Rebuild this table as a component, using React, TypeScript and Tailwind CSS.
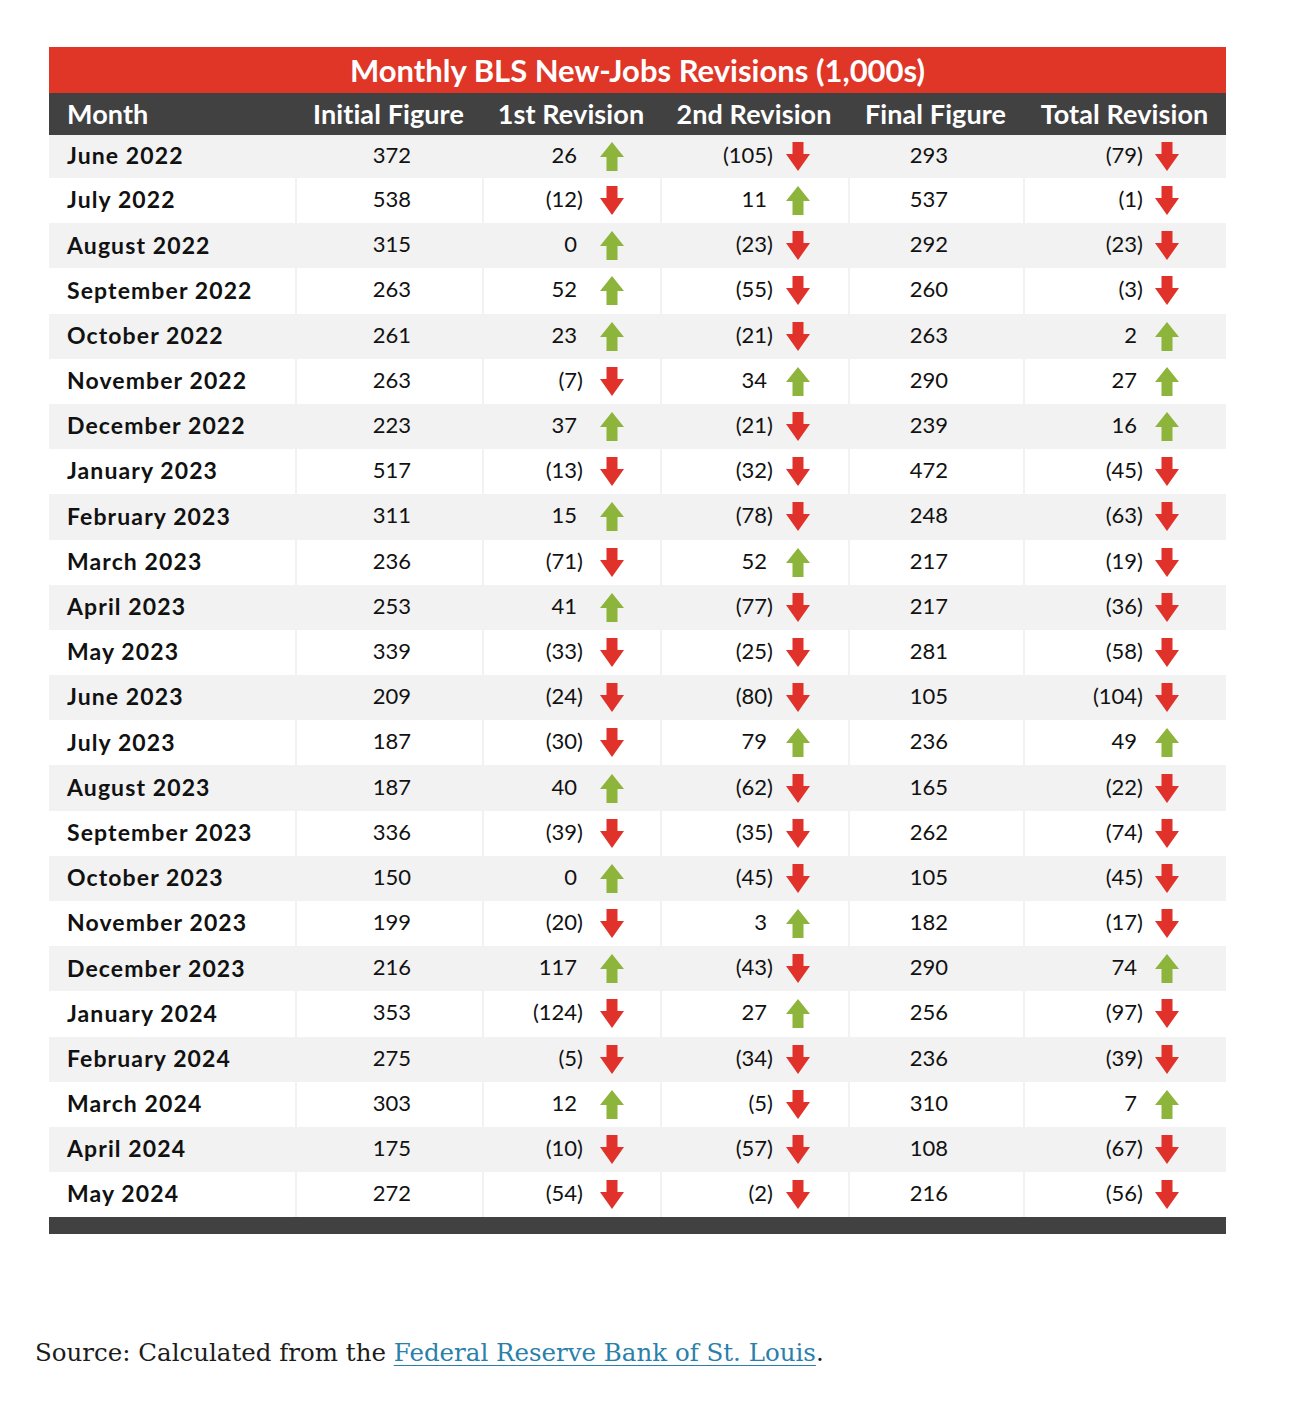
const rows: [string, string, string, string, string, string][] = [
  ["June 2022", "372", "26", "(105)", "293", "(79)"],
  ["July 2022", "538", "(12)", "11", "537", "(1)"],
  ["August 2022", "315", "0", "(23)", "292", "(23)"],
  ["September 2022", "263", "52", "(55)", "260", "(3)"],
  ["October 2022", "261", "23", "(21)", "263", "2"],
  ["November 2022", "263", "(7)", "34", "290", "27"],
  ["December 2022", "223", "37", "(21)", "239", "16"],
  ["January 2023", "517", "(13)", "(32)", "472", "(45)"],
  ["February 2023", "311", "15", "(78)", "248", "(63)"],
  ["March 2023", "236", "(71)", "52", "217", "(19)"],
  ["April 2023", "253", "41", "(77)", "217", "(36)"],
  ["May 2023", "339", "(33)", "(25)", "281", "(58)"],
  ["June 2023", "209", "(24)", "(80)", "105", "(104)"],
  ["July 2023", "187", "(30)", "79", "236", "49"],
  ["August 2023", "187", "40", "(62)", "165", "(22)"],
  ["September 2023", "336", "(39)", "(35)", "262", "(74)"],
  ["October 2023", "150", "0", "(45)", "105", "(45)"],
  ["November 2023", "199", "(20)", "3", "182", "(17)"],
  ["December 2023", "216", "117", "(43)", "290", "74"],
  ["January 2024", "353", "(124)", "27", "256", "(97)"],
  ["February 2024", "275", "(5)", "(34)", "236", "(39)"],
  ["March 2024", "303", "12", "(5)", "310", "7"],
  ["April 2024", "175", "(10)", "(57)", "108", "(67)"],
  ["May 2024", "272", "(54)", "(2)", "216", "(56)"],
]

const cols = "grid grid-cols-[246px_187px_178px_188px_175px_203px]"

function Arrow({ down }: { down: boolean }) {
  if (down) {
    return (
      <svg width="24" height="29" viewBox="0 0 24 29" className="shrink-0">
        <path d="M6.5 0H17.5V12H24L12 29L0 12H6.5Z" fill="#e0312a" />
      </svg>
    )
  }
  return (
    <svg width="24" height="29" viewBox="0 0 24 29" className="shrink-0">
      <path d="M6.5 29H17.5V15H24L12 0L0 15H6.5Z" fill="#8db43b" />
    </svg>
  )
}

function Num({ v }: { v: string }) {
  const neg = v.startsWith("(")
  return (
    <span className="text-right -translate-y-[2px]">
      {v}
      {!neg && <span className="invisible">)</span>}
    </span>
  )
}

function RevCell({ v, gap, pr }: { v: string; gap: string; pr: string }) {
  return (
    <div className={`flex items-center justify-end border-l-2 border-[#f1f2f1] ${pr}`}>
      <Num v={v} />
      <div className={gap}>
        <Arrow down={v.startsWith("(")} />
      </div>
    </div>
  )
}

export default function App() {
  return (
    <div className="bg-white min-h-[1409px] pt-[47px]" style={{ fontFamily: "Lato, 'Noto Sans', sans-serif" }}>
      <div className="ml-[49px] w-[1177px]">
        <div className="h-[46px] bg-[#df3627] text-white text-[31px] font-bold flex items-center justify-center pt-[1px]">
          Monthly BLS New-Jobs Revisions (1,000s)
        </div>
        <div className={`${cols} h-[42px] bg-[#414142] text-white text-[27px] tracking-[0.1px] font-bold items-center`}>
          <div className="pl-[18px]">Month</div>
          <div className="text-center">Initial Figure</div>
          <div className="text-center">1st Revision</div>
          <div className="text-center">2nd Revision</div>
          <div className="text-center">Final Figure</div>
          <div className="text-center">Total Revision</div>
        </div>
        {rows.map((r, i) => (
          <div
            key={i}
            className={`${cols} ${i === 0 ? "h-[43px]" : "h-[45.2px]"} text-[22px] text-[#111] ${i % 2 === 0 ? "bg-[#f1f2f1]" : "bg-white"}`}
          >
            <div className="flex items-center pl-[18px] font-bold text-[23px] tracking-[1.1px]">
              <span className="-translate-y-[1px]">{r[0]}</span>
            </div>
            <div className="flex items-center justify-end pr-[71px] border-l-2 border-[#f1f2f1]">
              <span className="-translate-y-[2px]">{r[1]}</span>
            </div>
            <RevCell v={r[2]} gap="ml-[17px]" pr="pr-[36px]" />
            <RevCell v={r[3]} gap="ml-[13px]" pr="pr-[38px]" />
            <div className="flex items-center justify-end pr-[75px] border-l-2 border-[#f1f2f1]">
              <span className="-translate-y-[2px]">{r[4]}</span>
            </div>
            <RevCell v={r[5]} gap="ml-[12px]" pr="pr-[47px]" />
          </div>
        ))}
        <div className="h-[17px] bg-[#414142]" />
      </div>
      <p
        className="mt-[101px] ml-[35px] text-[24.5px] text-[#1c1c1c]"
        style={{ fontFamily: "'DejaVu Serif', serif" }}
      >
        Source: Calculated from the{" "}
        <a href="#" className="text-[#2a7fab] underline underline-offset-4 decoration-1">
          Federal Reserve Bank of St. Louis
        </a>
        .
      </p>
    </div>
  )
}
